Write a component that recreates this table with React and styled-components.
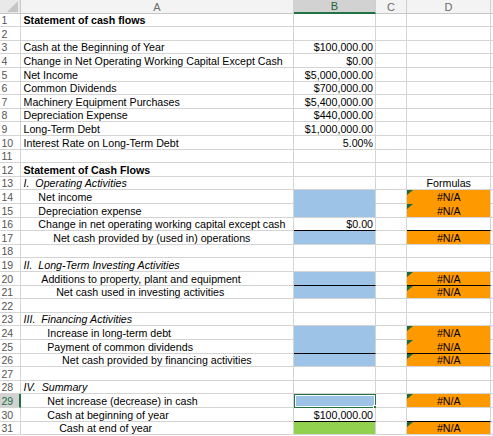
import React from 'react';
import styled, { createGlobalStyle } from 'styled-components';

const GRID = '#d4d4d4';
const BLUE = '#9dc3e6';
const ORANGE = '#ff9900';
const GREEN = '#92d050';
const XL_GREEN = '#217346';
const ROW_H = 13.6;

const Global = createGlobalStyle`
  html, body { margin: 0; padding: 0; background: #fff; }
  body { font-family: "Liberation Sans", Arial, sans-serif; }
`;

const Sheet = styled.div`
  display: grid;
  grid-template-columns: 21px 273px 82px 31px 84px 1fr;
  width: 493px;
  height: 436px;
  overflow: hidden;
  font-family: "Liberation Sans", Arial, sans-serif;
  font-size: 10.67px;
  color: #000;
  background: #fff;
`;

const Corner = styled.div`
  position: relative;
  background: #e9e9e9;
  border-right: 1px solid #c8c8c8;
  border-bottom: 1px solid #c8c8c8;
  &::after {
    content: '';
    position: absolute;
    right: 2px;
    bottom: 1px;
    width: 0;
    height: 0;
    border-left: 11px solid transparent;
    border-bottom: 11px solid #c6c6c6;
  }
`;

const ColHead = styled.div`
  display: flex;
  align-items: center;
  justify-content: center;
  background: ${p => (p.$active ? '#d2d2d2' : '#f3f3f3')};
  color: ${p => (p.$active ? '#1e5e3a' : '#6a6a6a')};
  font-size: 11px;
  border-right: 1px solid #d0d0d0;
  border-bottom: ${p => (p.$active ? `2px solid ${XL_GREEN}` : '1px solid #c8c8c8')};
`;

const RowHead = styled.div`
  display: flex;
  align-items: flex-end;
  padding: 0 0 0 1.5px;
  line-height: 12px;
  font-size: 10.5px;
  color: ${p => (p.$active ? XL_GREEN : '#555')};
  background: ${p => (p.$active ? '#d2d2d2' : '#fff')};
  border-right: ${p => (p.$active ? `2px solid ${XL_GREEN}` : `1px solid ${GRID}`)};
  border-bottom: 1px solid ${GRID};
`;

const Cell = styled.div`
  position: relative;
  min-width: 0;
  display: flex;
  align-items: flex-end;
  justify-content: ${p =>
    p.$align === 'right' ? 'flex-end' : p.$align === 'center' ? 'center' : 'flex-start'};
  padding: 0 2px 0 ${p => 2.5 + (p.$indent || 0) * 2.97}px;
  line-height: 11px;
  white-space: pre;
  font-weight: ${p => (p.$bold ? 700 : 400)};
  font-style: ${p => (p.$italic ? 'italic' : 'normal')};
  background: ${p => p.$fill || '#fff'};
  border-right: 1px solid ${GRID};
  border-bottom: 1px solid
    ${p => (p.$rule ? '#000' : p.$joinBelow ? p.$fill : GRID)};
`;

const ErrorMark = styled.span`
  position: absolute;
  top: 0;
  left: 0;
  width: 0;
  height: 0;
  border-top: 5px solid #1d6b35;
  border-right: 6px solid transparent;
`;

const Selection = styled.span`
  position: absolute;
  top: 0;
  left: 0;
  right: -1px;
  bottom: -1px;
  border: 1px solid ${XL_GREEN};
  box-shadow: inset 0 0 0 1px #fff;
  pointer-events: none;
  &::after {
    content: '';
    position: absolute;
    right: -3px;
    bottom: -3px;
    width: 3px;
    height: 3px;
    background: ${XL_GREEN};
    border: 1px solid #fff;
  }
`;

const NA = { d: '#N/A', dFill: ORANGE, tri: true };

const rows = [
  { a: 'Statement of cash flows', bold: true },
  {},
  { a: 'Cash at the Beginning of Year', b: '$100,000.00' },
  { a: 'Change in Net Operating Working Capital Except Cash', b: '$0.00' },
  { a: 'Net Income', b: '$5,000,000.00' },
  { a: 'Common Dividends', b: '$700,000.00' },
  { a: 'Machinery Equipment Purchases', b: '$5,400,000.00' },
  { a: 'Depreciation Expense', b: '$440,000.00' },
  { a: 'Long-Term Debt', b: '$1,000,000.00' },
  { a: 'Interest Rate on Long-Term Debt', b: '5.00%' },
  {},
  { a: 'Statement of Cash Flows', bold: true },
  { a: 'I.  Operating Activities', italic: true, d: 'Formulas' },
  { a: 'Net income', indent: 5, bFill: BLUE, ...NA },
  { a: 'Depreciation expense', indent: 5, bFill: BLUE, ...NA },
  { a: 'Change in net operating working capital except cash', indent: 5, b: '$0.00', rule: true },
  { a: 'Net cash provided by (used in) operations', indent: 10, bFill: BLUE, ...NA, tri: false },
  {},
  { a: 'II.  Long-Term Investing Activities', italic: true },
  { a: 'Additions to property, plant and equipment', indent: 6, bFill: BLUE, ...NA, rule: true },
  { a: 'Net cash used in investing activities', indent: 11, bFill: BLUE, ...NA },
  {},
  { a: 'III.  Financing Activities', italic: true },
  { a: 'Increase in long-term debt', indent: 8, bFill: BLUE, ...NA },
  { a: 'Payment of common dividends', indent: 8, bFill: BLUE, ...NA, rule: true },
  { a: 'Net cash provided by financing activities', indent: 13, bFill: BLUE, ...NA },
  {},
  { a: 'IV.  Summary', italic: true },
  { a: 'Net increase (decrease) in cash', indent: 8, bFill: BLUE, ...NA, selected: true },
  { a: 'Cash at beginning of year', indent: 8, b: '$100,000.00', rule: true },
  { a: 'Cash at end of year', indent: 12, bFill: GREEN, ...NA },
];

const SELECTED_ROW = 29;

export default function App() {
  const heights = Array.from({ length: rows.length + 1 }, (_, i) =>
    Math.round(ROW_H * (i + 1)) - Math.round(ROW_H * i)
  );
  const template = heights.map(h => `${h}px`).join(' ');

  return (
    <>
      <Global />
      <Sheet style={{ gridTemplateRows: template }}>
        <Corner />
        <ColHead>A</ColHead>
        <ColHead $active>B</ColHead>
        <ColHead>C</ColHead>
        <ColHead>D</ColHead>
        <ColHead />
        {rows.map((r, i) => {
          const next = rows[i + 1] || {};
          const n = i + 1;
          return (
            <React.Fragment key={n}>
              <RowHead $active={n === SELECTED_ROW}>{n}</RowHead>
              <Cell $indent={r.indent} $bold={r.bold} $italic={r.italic}>
                {r.a}
              </Cell>
              <Cell
                $align="right"
                $fill={r.bFill}
                $rule={r.rule}
                $joinBelow={r.bFill && next.bFill === r.bFill && !r.rule}
              >
                {r.b}
                {r.selected && <Selection />}
              </Cell>
              <Cell />
              <Cell
                $align="center"
                $fill={r.dFill}
                $rule={r.rule}
                $joinBelow={r.dFill && next.dFill === r.dFill && !r.rule}
              >
                {r.tri && <ErrorMark />}
                {r.d}
              </Cell>
              <Cell />
            </React.Fragment>
          );
        })}
      </Sheet>
    </>
  );
}
